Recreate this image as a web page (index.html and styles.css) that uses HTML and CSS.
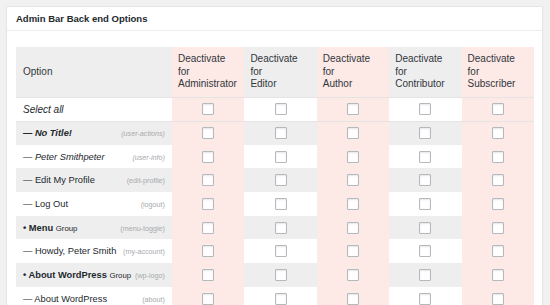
FILE: index.html
```html
<!DOCTYPE html>
<html lang="en">
<head>
    <meta charset="UTF-8">
    <title>Admin Bar Back end Options</title>
    <link rel="stylesheet" href="styles.css">
</head>
<body>
    <div class="postbox">
        <h2 class="postbox-title">Admin Bar Back end Options</h2>
        <div class="inside">
            <table class="options">
                <colgroup>
                    <col class="col-option">
                    <col class="col-role"><col class="col-role"><col class="col-role"><col class="col-role"><col class="col-role">
                </colgroup>
                <thead>
                    <tr>
                        <th>Option</th>
                        <th class="pink">Deactivate<br>for<br>Administrator</th>
                        <th>Deactivate<br>for<br>Editor</th>
                        <th class="pink">Deactivate<br>for<br>Author</th>
                        <th>Deactivate<br>for<br>Contributor</th>
                        <th class="pink">Deactivate<br>for<br>Subscriber</th>
                    </tr>
                </thead>
                <tbody>
                    <tr class="select-all">
                        <td><div class="item"><em>Select all</em></div></td>
                        <td class="pink"><span class="cb"></span></td>
                        <td><span class="cb"></span></td>
                        <td class="pink"><span class="cb"></span></td>
                        <td><span class="cb"></span></td>
                        <td class="pink"><span class="cb"></span></td>
                    </tr>
                    <tr class="alt">
                        <td><div class="item italic"><span><b>— No Title!</b></span><span class="id">(user-actions)</span></div></td>
                        <td class="pink"><span class="cb"></span></td>
                        <td><span class="cb"></span></td>
                        <td class="pink"><span class="cb"></span></td>
                        <td><span class="cb"></span></td>
                        <td class="pink"><span class="cb"></span></td>
                    </tr>
                    <tr>
                        <td><div class="item italic"><span>— Peter Smithpeter</span><span class="id">(user-info)</span></div></td>
                        <td class="pink"><span class="cb"></span></td>
                        <td><span class="cb"></span></td>
                        <td class="pink"><span class="cb"></span></td>
                        <td><span class="cb"></span></td>
                        <td class="pink"><span class="cb"></span></td>
                    </tr>
                    <tr class="alt">
                        <td><div class="item"><span>— Edit My Profile</span><span class="id">(edit-profile)</span></div></td>
                        <td class="pink"><span class="cb"></span></td>
                        <td><span class="cb"></span></td>
                        <td class="pink"><span class="cb"></span></td>
                        <td><span class="cb"></span></td>
                        <td class="pink"><span class="cb"></span></td>
                    </tr>
                    <tr>
                        <td><div class="item"><span>— Log Out</span><span class="id">(logout)</span></div></td>
                        <td class="pink"><span class="cb"></span></td>
                        <td><span class="cb"></span></td>
                        <td class="pink"><span class="cb"></span></td>
                        <td><span class="cb"></span></td>
                        <td class="pink"><span class="cb"></span></td>
                    </tr>
                    <tr class="alt">
                        <td><div class="item"><span><b>• Menu</b> <small>Group</small></span><span class="id">(menu-toggle)</span></div></td>
                        <td class="pink"><span class="cb"></span></td>
                        <td><span class="cb"></span></td>
                        <td class="pink"><span class="cb"></span></td>
                        <td><span class="cb"></span></td>
                        <td class="pink"><span class="cb"></span></td>
                    </tr>
                    <tr>
                        <td><div class="item"><span>— Howdy, Peter Smith</span><span class="id">(my-account)</span></div></td>
                        <td class="pink"><span class="cb"></span></td>
                        <td><span class="cb"></span></td>
                        <td class="pink"><span class="cb"></span></td>
                        <td><span class="cb"></span></td>
                        <td class="pink"><span class="cb"></span></td>
                    </tr>
                    <tr class="alt">
                        <td><div class="item"><span><b>• About WordPress</b> <small>Group</small></span><span class="id">(wp-logo)</span></div></td>
                        <td class="pink"><span class="cb"></span></td>
                        <td><span class="cb"></span></td>
                        <td class="pink"><span class="cb"></span></td>
                        <td><span class="cb"></span></td>
                        <td class="pink"><span class="cb"></span></td>
                    </tr>
                    <tr>
                        <td><div class="item"><span>— About WordPress</span><span class="id">(about)</span></div></td>
                        <td class="pink"><span class="cb"></span></td>
                        <td><span class="cb"></span></td>
                        <td class="pink"><span class="cb"></span></td>
                        <td><span class="cb"></span></td>
                        <td class="pink"><span class="cb"></span></td>
                    </tr>
                </tbody>
            </table>
        </div>
    </div>
</body>
</html>
```

FILE: styles.css
```css
body {
    margin: 0;
    padding: 6px 0 0 6px;
    background-color: #f1f1f1;
    font-family: "Liberation Sans", Arial, sans-serif;
    color: #32373c;
    overflow: hidden;
}

.postbox {
    width: 535px;
    background: #fff;
    border: 1px solid #e5e5e5;
    border-bottom: none;
    box-shadow: 0 1px 1px rgba(0, 0, 0, 0.04);
    height: 320px;
}

.postbox-title {
    margin: 0;
    height: 23px;
    line-height: 23px;
    padding: 0 9px;
    font-size: 9.5px;
    font-weight: bold;
    color: #23282d;
    border-bottom: 1px solid #eee;
}

.inside {
    padding: 16px 8px 0 9px;
}

.options {
    width: 518px;
    table-layout: fixed;
    border-collapse: collapse;
    font-size: 10px;
}

.options .col-option {
    width: 156px;
}

.options th {
    height: 50px;
    padding: 0 0 0 6px;
    text-align: left;
    font-weight: normal;
    line-height: 12.5px;
    background: #eee;
    border-bottom: 1px solid #e4e4e4;
    box-sizing: border-box;
}

.options th:first-child {
    padding-left: 7px;
}

.options td {
    height: 23.7px;
    padding: 0;
    text-align: center;
    vertical-align: middle;
    box-sizing: border-box;
}

.options td:first-child {
    text-align: left;
    padding: 0 7px;
}

.options tr.select-all td {
    height: 24px;
    border-bottom: 1px solid #e4e4e4;
}

.options tr.alt td {
    background: #eee;
}

.options th.pink,
.options td.pink,
.options tr.alt td.pink {
    background: #fde9e6;
}

.item {
    display: flex;
    justify-content: space-between;
    align-items: baseline;
    white-space: nowrap;
    font-size: 9.3px;
    color: #23282d;
}

.item.italic {
    font-style: italic;
}

.item em {
    font-size: 10px;
}

.item small {
    font-size: 7.8px;
}

.id {
    font-size: 7.2px;
    color: #a7aaad;
}

.cb {
    display: inline-block;
    width: 10px;
    height: 10px;
    border: 1px solid #b4b9be;
    border-radius: 1px;
    background: #fff;
    box-shadow: inset 0 1px 2px rgba(0, 0, 0, 0.1);
    vertical-align: middle;
}
```
